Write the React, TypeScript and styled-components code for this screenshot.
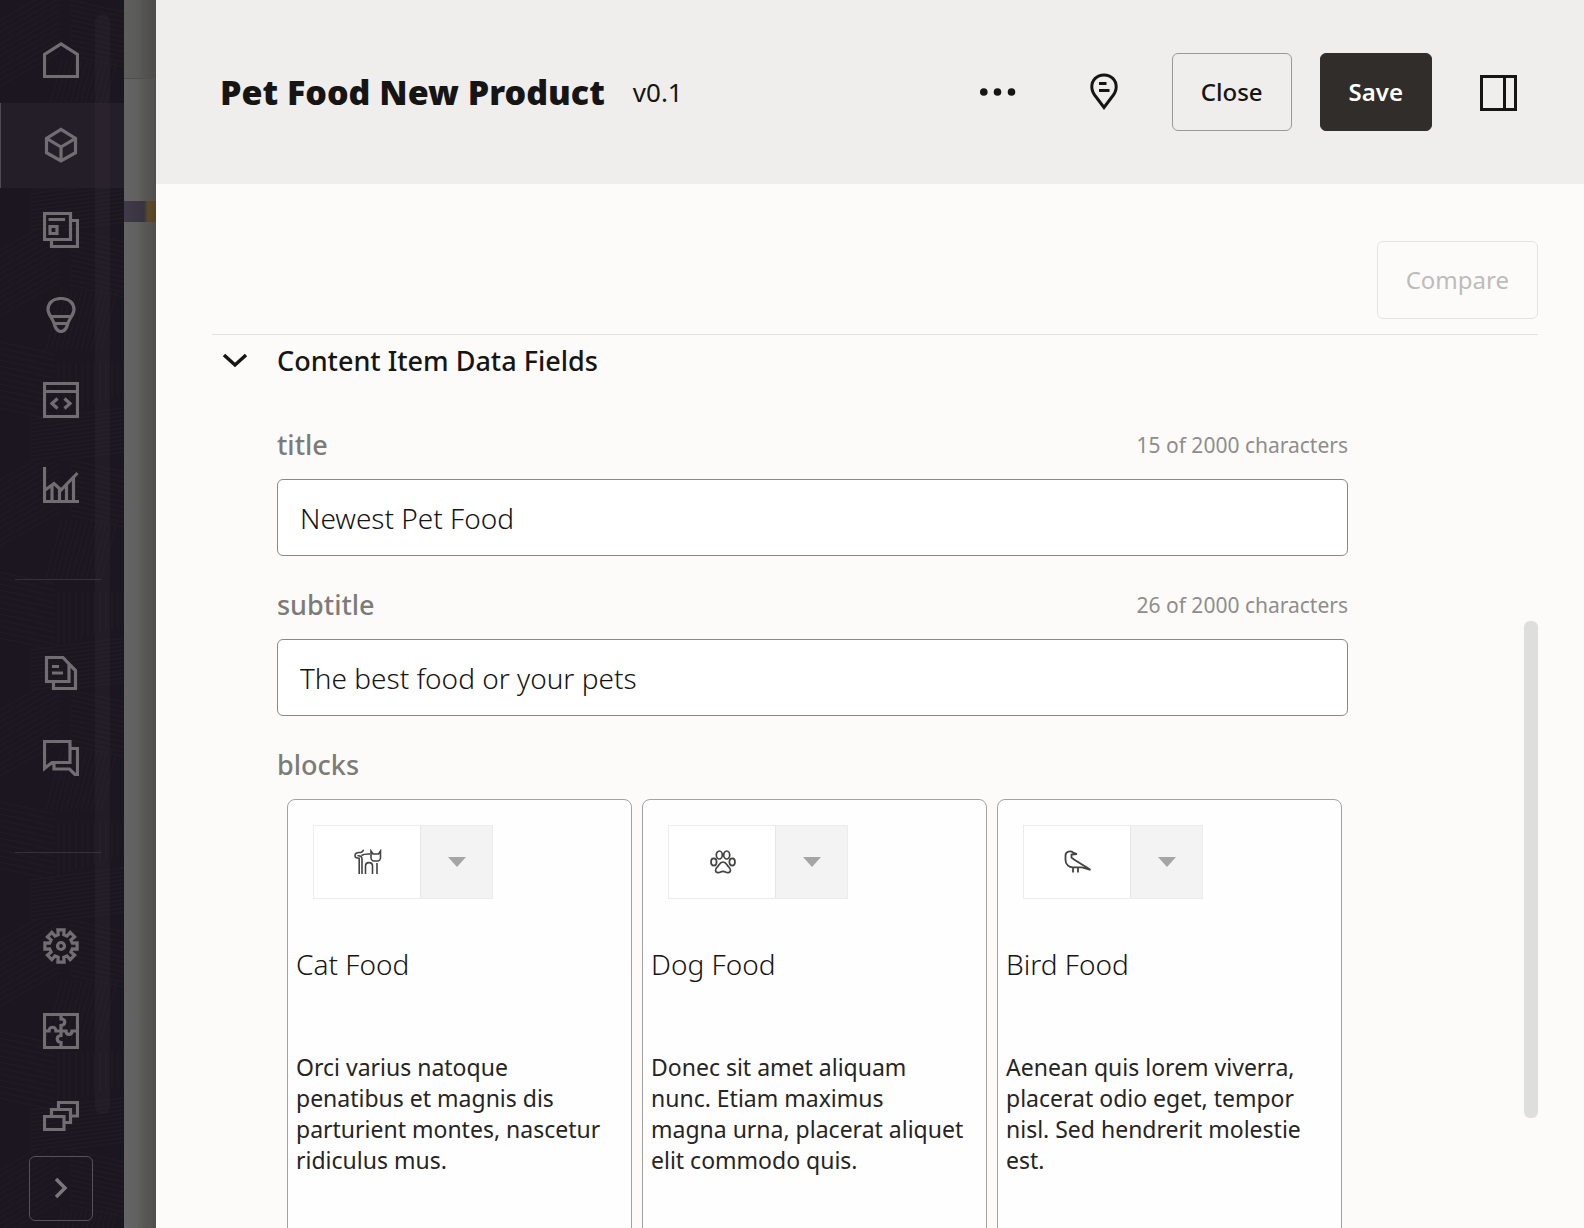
import React, { useState } from "react";
import styled, { createGlobalStyle } from "styled-components";

const Global = createGlobalStyle`
  *, *::before, *::after { box-sizing: border-box; }
  body {
    margin: 0;
    overflow: hidden;
    color: #161513;
    font-family: "Noto Sans", "Open Sans", sans-serif;
  }
  button, input { font-family: inherit; color: inherit; }
`;

const Shell = styled.div`
  display: flex;
  height: 100vh;
  overflow: hidden;
  background: #fcfbfa;
`;

/* ---------- navigation rail ---------- */

const Rail = styled.aside`
  position: relative;
  flex: none;
  display: flex;
  flex-direction: column;
  width: 124px;
  background: #1c1620;
  color: #716d73;
`;

const Texture = styled.svg`
  position: absolute;
  inset: 0;
  width: 100%;
  height: 100%;
`;

const RailScroll = styled.span`
  position: absolute;
  top: 14px;
  bottom: 114px;
  left: 95px;
  width: 15px;
  border-radius: 8px;
  background: rgba(110, 105, 110, 0.08);
`;

const RailNav = styled.nav`
  position: relative;
  flex: 1;
  min-height: 0;
  overflow: hidden;
  padding-top: 18px;
`;

const RailLink = styled.a<{ $active?: boolean }>`
  display: flex;
  align-items: center;
  height: 85px;
  padding: 0 0 2px ${(p) => (p.$active ? 42 : 43)}px;
  border-left: ${(p) => (p.$active ? "1px solid #504b53" : "0")};
  background: ${(p) => (p.$active ? "#241e29" : "transparent")};
  color: inherit;
`;

const RailDivider = styled.hr`
  width: 86px;
  height: 1px;
  margin: 51px 0 51px 15px;
  border: 0;
  background: #363038;
`;

const RailFooter = styled.div`
  position: relative;
  display: flex;
  height: 72px;
  padding-left: 29px;
`;

const ExpandButton = styled.button`
  display: grid;
  place-items: center;
  width: 64px;
  height: 65px;
  padding: 0 0 2px;
  border: 1px solid #565158;
  border-radius: 6px;
  background: transparent;
  color: #7b777d;
`;

/* ---------- dimmed page behind the panel ---------- */

const Backdrop = styled.div`
  flex: none;
  display: flex;
  flex-direction: column;
  width: 32px;
  background: linear-gradient(90deg, #646464 0%, #616161 40%, #585754 65%, #514f4c 100%);
`;

const BackdropTop = styled.div`
  height: 79px;
  border-bottom: 1px solid #504f4d;
  background: rgba(60, 58, 54, 0.15);
`;

const BackdropBanner = styled.div`
  height: 21px;
  margin-top: 122px;
  background: linear-gradient(90deg, #403b49 0, #38333f 20px, #5c4a2c 24px, #57431f 100%);
`;

/* ---------- editor panel ---------- */

const Panel = styled.main`
  flex: 1;
  min-width: 0;
  display: flex;
  flex-direction: column;
`;

const Header = styled.header`
  flex: none;
  display: flex;
  align-items: center;
  height: 184px;
  padding: 0 46px 0 64px;
  background: #efeeec;
`;

const Title = styled.h1`
  margin: 0;
  font-size: 34px;
  line-height: 48px;
  font-weight: 900;
  white-space: nowrap;
`;

const Version = styled.span`
  margin-left: 28px;
  font-size: 26px;
  line-height: 40px;
`;

const Actions = styled.div`
  display: flex;
  align-items: center;
  gap: 28px;
  margin-left: auto;
`;

const IconButton = styled.button`
  display: grid;
  place-items: center;
  width: 78px;
  height: 78px;
  padding: 0;
  border: 0;
  background: transparent;
`;

const Button = styled.button<{ $primary?: boolean }>`
  height: 78px;
  padding: 0 28px;
  border: 1px solid ${(p) => (p.$primary ? "#312d2a" : "#9a9997")};
  border-radius: 6px;
  background: ${(p) => (p.$primary ? "#312d2a" : "transparent")};
  color: ${(p) => (p.$primary ? "#ffffff" : "#161513")};
  font-size: 24px;
  line-height: 32px;
  font-weight: ${(p) => (p.$primary ? 600 : 500)};

  &:disabled {
    border-color: #e4e3e1;
    color: #bdbcba;
    font-weight: 400;
  }
`;

const Body = styled.div`
  position: relative;
  flex: 1;
  min-height: 0;
  overflow: hidden;
  padding: 57px 46px 0 56px;
`;

const BodyScroll = styled.span`
  position: absolute;
  top: 437px;
  right: 46px;
  width: 14px;
  height: 497px;
  border-radius: 6px;
  background: #dededc;
`;

const Toolbar = styled.div`
  display: flex;
  justify-content: flex-end;
  padding-bottom: 15px;
  border-bottom: 1px solid #e2e1df;
`;

const SectionToggle = styled.button`
  display: flex;
  align-items: center;
  height: 52px;
  padding: 0 0 0 10px;
  border: 0;
  background: transparent;
`;

const SectionTitle = styled.h2`
  margin: 0;
  padding-left: 29px;
  font-size: 27px;
  line-height: 40px;
  font-weight: 500;
`;

const Fields = styled.div`
  display: flex;
  flex-direction: column;
  gap: 29px;
  padding: 38px 190px 0 65px;
`;

const Field = styled.div`
  display: flex;
  flex-direction: column;
  gap: 14px;
`;

const LabelRow = styled.div`
  display: flex;
  align-items: center;
  justify-content: space-between;
  height: 40px;
`;

const labelStyle = `
  color: #7d7b78;
  font-size: 27px;
  line-height: 40px;
  font-weight: 500;
`;

const Label = styled.label`
  ${labelStyle}
`;

const GroupLabel = styled.span`
  ${labelStyle}
`;

const Counter = styled.span`
  color: #8f8d8b;
  font-size: 21px;
  line-height: 32px;
`;

const TextInput = styled.input`
  width: 100%;
  height: 77px;
  padding: 0 22px;
  border: 1px solid #8b8988;
  border-radius: 6px;
  outline: 0;
  background: #ffffff;
  font-size: 28px;
  font-weight: 300;
`;

const Cards = styled.div`
  display: grid;
  grid-template-columns: repeat(3, 1fr);
  gap: 10px;
  padding: 0 6px 0 10px;
`;

const Card = styled.article`
  min-height: 500px;
  padding: 25px 18px 25px 8px;
  border: 1px solid #a3a2a1;
  border-radius: 8px;
  background: #fefefe;
`;

const Picker = styled.div`
  display: flex;
  width: 180px;
  height: 74px;
  margin-left: 17px;
  border: 1px solid #ececeb;
`;

const PickerIcon = styled.button`
  flex: 1;
  display: grid;
  place-items: center;
  padding: 0 0 0 2px;
  border: 0;
  background: #ffffff;
  color: #444342;
`;

const PickerMenu = styled.button`
  display: grid;
  place-items: center;
  width: 72px;
  padding: 0;
  border: 0;
  border-left: 1px solid #e6e6e5;
  background: #f3f3f3;
  color: #a5a5a5;
`;

const CardTitle = styled.h3`
  margin: 45px 0 0;
  font-size: 28px;
  line-height: 40px;
  font-weight: 300;
`;

const CardText = styled.p`
  margin: 68px 0 0;
  color: #262523;
  font-size: 23px;
  line-height: 31px;
  white-space: pre-line;
`;

/* ---------- icons ---------- */

const gearOutline = (() => {
  const points: string[] = [];
  for (let i = 0; i < 8; i++) {
    const mid = (i * Math.PI) / 4;
    const corners: [number, number][] = [
      [11.6, -0.24],
      [16.4, -0.19],
      [16.4, 0.19],
      [11.6, 0.24],
    ];
    corners.forEach(([radius, turn]) => {
      const x = 18 + radius * Math.sin(mid + turn);
      const y = 18 - radius * Math.cos(mid + turn);
      points.push(`${x.toFixed(1)} ${y.toFixed(1)}`);
    });
  }
  return `M${points.join("L")}Z`;
})();

const railPaths: Record<string, string> = {
  Home: "M1.5 34.5V12.5L18 2L34.5 12.5V34.5Z",
  Assets: "M18 2.3L32.5 11.3V25.7L18 34L3.5 25.7V11.3ZM3.5 11.3L18 20L32.5 11.3M18 20V34",
  Sites: "M1.5 1.5H27.5V27.5H1.5ZM27.5 8.5H34.5V34.5H8.5V27.5M5.5 7.5H22M7 14.5H14V21.5H7Z",
  Recommendations:
    "M18 1.5C9.5 1.5 5 6.5 5 12.5C5 17.5 9 20.5 11 26C12.2 30.5 13.5 34.5 18 34.5S23.8 30.5 25 26C27 20.5 31 17.5 31 12.5C31 6.5 26.5 1.5 18 1.5ZM8 19.5H28M11 26.5H25",
  Developer: "M1.5 1.5H34.5V34.5H1.5ZM1.5 9.5H34.5M14.5 16.5L9 21.5L14.5 26.5M21.5 16.5L27 21.5L21.5 26.5",
  Analytics: "M1.5 0V34.5H36M1.5 23.5L11 16.5L18 23L34.5 6M9 18V34M16.5 23V34M23.5 18V34M30.5 10V34",
  Content: "M3.5 2.5H20L26 9V26.5H3.5ZM26 9L32.5 15.5V33.5H10.5V26.5M9 11.5H16M9 18H20",
  Conversations: "M1.5 1.5H27V22.5H9L1.5 28.5ZM27 8.5H34.5V34.5H32L26.5 29H11V22.5",
  Administration: `${gearOutline}M21.5 18A3.5 3.5 0 1 1 14.5 18A3.5 3.5 0 1 1 21.5 18Z`,
  Integrations:
    "M1.5 1.5H34.5V34.5H1.5ZM18 2V6C23 6 23 12 18 12.5V18M2 18H6C6 13 13 13 13 18H18M18 18H23C23 22.5 29 22.5 29 18H34M18 18V22.5C13 23 13 29 18 29.5V34",
  Capture: "M1.5 18.5H21V31.5H1.5ZM8.5 18.5V11.5H27.5V24.5H21M15.5 11.5V4.5H34.5V18H27.5",
};

function RailIcon({ name }: { name: string }) {
  return (
    <svg width="36" height="36" viewBox="0 0 36 36" fill="none" stroke="currentColor" strokeWidth="3.2" aria-hidden="true">
      <path d={railPaths[name]} />
    </svg>
  );
}

function RailTexture() {
  return (
    <Texture aria-hidden="true">
      <defs>
        <pattern id="grain" width="124" height="230" patternUnits="userSpaceOnUse">
          <g fill="none" stroke="#2a2426" strokeWidth="1" opacity="0.3">
            {Array.from({ length: 12 }, (_, i) => (
              <path
                key={i}
                d={`M0 ${20 + i * 6}L60 ${i * 6 - 14}M${62 + i * 5} 60L${46 + i * 5} 120M0 ${112 + i * 6}L54 ${124 + i * 6}M${58 + i * 6} 132V${186 - i * 2}M30 ${190 + i * 4}L124 ${178 + i * 4}M70 ${i * 5}L124 ${12 + i * 5}`}
              />
            ))}
          </g>
        </pattern>
      </defs>
      <rect width="100%" height="100%" fill="url(#grain)" />
    </Texture>
  );
}

function CatIcon() {
  return (
    <svg width="28" height="26" viewBox="0 0 28 26" fill="none" stroke="currentColor" strokeWidth="1.6" aria-hidden="true">
      <path d="M10 1.2C8.5 1.2 8.5 3.5 6.5 3.5H5C2.5 3.5 1 5 1 6.8C1 8.6 2.5 9.3 5.2 9.3V25" />
      <path d="M3.5 6.8C6 6.4 8 7.4 8 10V25M7.5 6.5C9.5 5 12.5 4.8 16 5" />
      <path d="M11.5 25V17C11.5 12.5 18.5 12.5 18.5 17V25M23 14V25" />
      <path d="M17 2V8.5C17 10.5 18.5 12 20 12H23.5C25 12 26.5 10.5 26.5 8.5V2L24.5 5H19Z" />
    </svg>
  );
}

function PawIcon() {
  return (
    <svg width="26" height="24" viewBox="0 0 26 24" fill="none" stroke="currentColor" strokeWidth="1.7" aria-hidden="true">
      <ellipse cx="9.3" cy="5" rx="3" ry="4" />
      <ellipse cx="16.7" cy="5" rx="3" ry="4" />
      <ellipse cx="3.8" cy="12" rx="2.8" ry="3.6" />
      <ellipse cx="22.2" cy="12" rx="2.8" ry="3.6" />
      <path d="M13 12C15.5 12 16.5 14 17.5 15.5C18.5 17 20.8 18 20.5 20.5C20 23.2 17 22.8 15.5 22C14 21.2 12 21.2 10.5 22C9 22.8 6 23.2 5.5 20.5C5.2 18 7.5 17 8.5 15.5C9.5 14 10.5 12 13 12Z" />
    </svg>
  );
}

function BirdIcon() {
  return (
    <svg width="28" height="24" viewBox="0 0 28 24" fill="none" stroke="currentColor" strokeWidth="1.8" aria-hidden="true">
      <path d="M13 4L9 2.5C7 0.5 1.5 1 1.5 5.5V10C1.5 14.5 5 17.3 9 17.3H18L26.5 19.8L10 9.5L7.5 7.5V4.5L13 4M9 17.3V22.5M14 17.3V22.5" />
    </svg>
  );
}

/* ---------- content ---------- */

const railGroups = [
  ["Home", "Assets", "Sites", "Recommendations", "Developer", "Analytics"],
  ["Content", "Conversations"],
  ["Administration", "Integrations", "Capture"],
];

const blocks = [
  {
    title: "Cat Food",
    text: "Orci varius natoque\npenatibus et magnis dis\nparturient montes, nascetur\nridiculus mus.",
    Icon: CatIcon,
  },
  {
    title: "Dog Food",
    text: "Donec sit amet aliquam\nnunc. Etiam maximus\nmagna urna, placerat aliquet\nelit commodo quis.",
    Icon: PawIcon,
  },
  {
    title: "Bird Food",
    text: "Aenean quis lorem viverra,\nplacerat odio eget, tempor\nnisl. Sed hendrerit molestie\nest.",
    Icon: BirdIcon,
  },
];

function TextField({ id, label, counter, initial }: { id: string; label: string; counter: string; initial: string }) {
  const [value, setValue] = useState(initial);
  return (
    <Field>
      <LabelRow>
        <Label htmlFor={id}>{label}</Label>
        <Counter>{counter}</Counter>
      </LabelRow>
      <TextInput id={id} type="text" value={value} onChange={(e) => setValue(e.target.value)} />
    </Field>
  );
}

export default function App() {
  return (
    <Shell>
      <Global />
      <Rail>
        <RailTexture />
        <RailNav aria-label="Main">
          {railGroups.map((group, index) => (
            <React.Fragment key={group[0]}>
              {index > 0 && <RailDivider />}
              {group.map((name) => (
                <RailLink key={name} href="#" aria-label={name} $active={name === "Assets"}>
                  <RailIcon name={name} />
                </RailLink>
              ))}
            </React.Fragment>
          ))}
        </RailNav>
        <RailFooter>
          <ExpandButton type="button" aria-label="Expand navigation">
            <svg width="14" height="22" viewBox="0 0 14 22" fill="none" stroke="currentColor" strokeWidth="3.5" aria-hidden="true">
              <path d="M2 2L11 11L2 20" />
            </svg>
          </ExpandButton>
        </RailFooter>
        <RailScroll />
      </Rail>

      <Backdrop>
        <BackdropTop />
        <BackdropBanner />
      </Backdrop>

      <Panel>
        <Header>
          <Title>Pet Food New Product</Title>
          <Version>v0.1</Version>
          <Actions>
            <IconButton type="button" aria-label="More actions">
              <svg width="38" height="10" viewBox="0 0 38 10" fill="currentColor" aria-hidden="true">
                <circle cx="3.8" cy="5" r="3.8" />
                <circle cx="17.5" cy="5" r="3.8" />
                <circle cx="31.5" cy="5" r="3.8" />
              </svg>
            </IconButton>
            <IconButton type="button" aria-label="Annotations">
              <svg width="30" height="38" viewBox="0 0 30 38" fill="none" stroke="currentColor" strokeWidth="3" aria-hidden="true">
                <path d="M14 2C6.8 2 1.8 7 1.8 14C1.8 18.5 3.5 21 6.5 24.5L14 34.5L21.5 24.5C24.5 21 26.2 18.5 26.2 14C26.2 7 21.2 2 14 2Z" />
                <path d="M9 10.5H16.5M9 17.5H19.5" />
              </svg>
            </IconButton>
            <Button type="button">Close</Button>
            <Button type="button" $primary>
              Save
            </Button>
            <IconButton type="button" aria-label="Toggle side panel">
              <svg width="38" height="38" viewBox="0 0 38 38" fill="none" stroke="currentColor" strokeWidth="3" aria-hidden="true">
                <path d="M1.5 3.5H35.5V36.5H1.5ZM24.5 3.5V36.5" />
              </svg>
            </IconButton>
          </Actions>
        </Header>

        <Body>
          <Toolbar>
            <Button type="button" disabled>
              Compare
            </Button>
          </Toolbar>
          <SectionToggle type="button" aria-expanded="true">
            <svg width="26" height="16" viewBox="0 0 26 16" fill="none" stroke="currentColor" strokeWidth="3.5" aria-hidden="true">
              <path d="M2 2L13 12L24 2" />
            </svg>
            <SectionTitle>Content Item Data Fields</SectionTitle>
          </SectionToggle>
          <Fields>
            <TextField id="title" label="title" counter="15 of 2000 characters" initial="Newest Pet Food" />
            <TextField id="subtitle" label="subtitle" counter="26 of 2000 characters" initial="The best food or your pets" />
            <Field role="group" aria-labelledby="blocks-label">
              <LabelRow>
                <GroupLabel id="blocks-label">blocks</GroupLabel>
              </LabelRow>
              <Cards>
                {blocks.map(({ title, text, Icon }) => (
                  <Card key={title}>
                    <Picker>
                      <PickerIcon type="button" aria-label={`${title} icon`}>
                        <Icon />
                      </PickerIcon>
                      <PickerMenu type="button" aria-label={`Choose icon for ${title}`}>
                        <svg width="18" height="10" viewBox="0 0 18 10" fill="currentColor" aria-hidden="true">
                          <path d="M0 0H18L9 10Z" />
                        </svg>
                      </PickerMenu>
                    </Picker>
                    <CardTitle>{title}</CardTitle>
                    <CardText>{text}</CardText>
                  </Card>
                ))}
              </Cards>
            </Field>
          </Fields>
          <BodyScroll />
        </Body>
      </Panel>
    </Shell>
  );
}
